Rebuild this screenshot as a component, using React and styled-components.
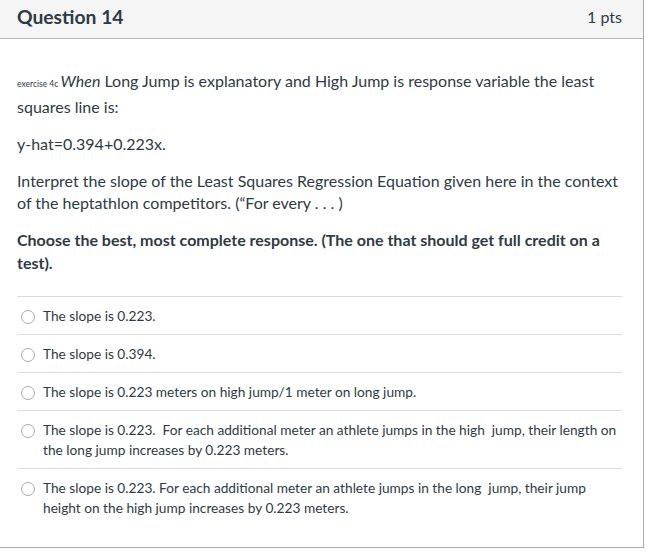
import React from 'react';
import styled, { createGlobalStyle } from 'styled-components';

const Global = createGlobalStyle`
  body {
    margin: 0;
    background: #fff;
    font-family: Lato, "Open Sans", sans-serif;
    color: #2d3b45;
  }
`;

const Card = styled.div`
  width: 643px;
  height: 547px;
  border-right: 1px solid #a9a9a9;
  border-bottom: 1px solid #a9a9a9;
  display: flex;
  flex-direction: column;
`;

const Header = styled.div`
  display: flex;
  align-items: center;
  justify-content: space-between;
  height: 39px;
  box-sizing: border-box;
  padding: 0 21px 5px 17px;
  background: #f5f5f5;
  border-bottom: 1px solid #b4b4b4;
`;

const Title = styled.div`
  font-size: 19.3px;
  font-weight: 700;
  color: #2d3b45;
`;

const Points = styled.div`
  font-size: 16px;
  color: #2d3b45;
`;

const Body = styled.div`
  padding: 31px 21px 0 17px;
`;

const Para = styled.p`
  margin: 0 0 14.5px 0;
  font-size: 16px;
  line-height: 22.5px;
  font-weight: ${(p) => (p.bold ? 700 : 400)};
`;

const Tiny = styled.span`
  font-size: 8.5px;
`;

const Answers = styled.div`
  margin-top: 22px;
  border-top: 1px solid #dcdcdc;
`;

const Answer = styled.label`
  display: flex;
  align-items: flex-start;
  padding: 9px 0 8px 4px;
  border-top: ${(p) => (p.first ? 'none' : '1px solid #dcdcdc')};
  font-size: 13.7px;
  line-height: 20px;
`;

const Radio = styled.span`
  flex: none;
  width: 12px;
  height: 12px;
  margin: 4px 8px 0 0;
  border: 1px solid #a8a8a8;
  border-radius: 50%;
  background: #fff;
`;

const answers = [
  'The slope is 0.223.',
  'The slope is 0.394.',
  'The slope is 0.223 meters on high jump/1 meter on long jump.',
  'The slope is 0.223.  For each additional meter an athlete jumps in the high  jump, their length on the long jump increases by 0.223 meters.',
  'The slope is 0.223. For each additional meter an athlete jumps in the long  jump, their jump height on the high jump increases by 0.223 meters.',
];

export default function App() {
  return (
    <>
      <Global />
      <Card>
        <Header>
          <Title>Question 14</Title>
          <Points>1 pts</Points>
        </Header>
        <Body>
          <Para>
            <Tiny>exercise 4c </Tiny>
            <em>When</em> Long Jump is explanatory and High Jump is response variable the least squares line is:
          </Para>
          <Para>y-hat=0.394+0.223x.</Para>
          <Para>
            Interpret the slope of the Least Squares Regression Equation given here in the context of the heptathlon
            competitors. (“For every . . . )
          </Para>
          <Para bold>Choose the best, most complete response. (The one that should get full credit on a test).</Para>
          <Answers>
            {answers.map((a, i) => (
              <Answer key={i} first={i === 0}>
                <Radio />
                <span style={{ whiteSpace: 'pre-wrap' }}>{a}</span>
              </Answer>
            ))}
          </Answers>
        </Body>
      </Card>
    </>
  );
}
